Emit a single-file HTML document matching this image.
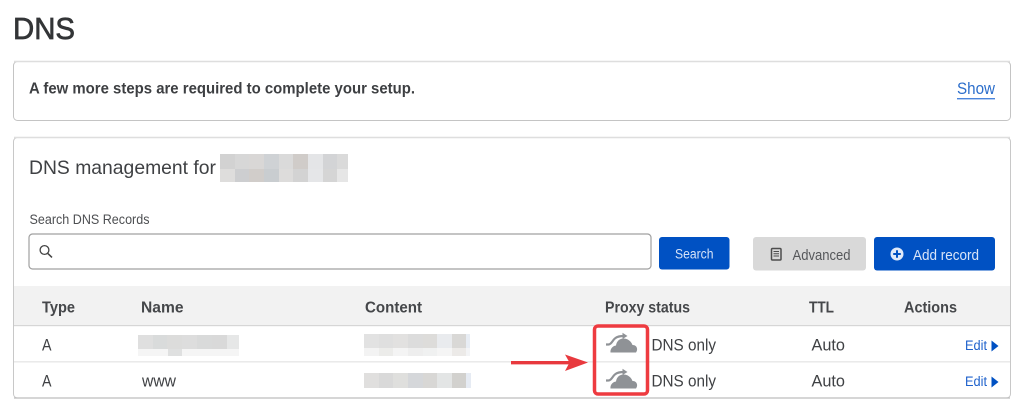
<!DOCTYPE html>
<html lang="en">
<head>
<meta charset="utf-8">
<title>DNS</title>
<style>
html,body{margin:0;padding:0;background:#fff;width:1024px;height:413px;overflow:hidden}
svg{display:block;position:absolute;left:0;top:0;filter:blur(.3px)}
text{font-family:"Liberation Sans",sans-serif;fill:#3b3d3f}
.b{font-weight:bold}
.th{font-weight:bold;font-size:16px;fill:#45474a}
.td{font-size:16.5px;fill:#3f4144}
.ed{font-size:13.5px;fill:#1f62cc}
</style>
</head>
<body>
<svg width="1024" height="413" viewBox="0 0 1024 413" xmlns="http://www.w3.org/2000/svg">
  <!-- Title -->
  <text x="13" y="39" font-size="31" textLength="62" lengthAdjust="spacingAndGlyphs" style="fill:#333537;stroke:#333537;stroke-width:.7">DNS</text>

  <!-- Setup card -->
  <rect x="13.5" y="61.5" width="997" height="59" rx="4" fill="#fff" stroke="#c4c4c4"/>
  <path d="M14 61.5H1010" stroke="#dedede" stroke-width="1.6"/>
  <text x="29" y="93.500" font-size="15.5" class="b" textLength="386" lengthAdjust="spacingAndGlyphs" style="fill:#3d3f42">A few more steps are required to complete your setup.</text>
  <text x="957" y="94" font-size="16.5" textLength="38" lengthAdjust="spacingAndGlyphs" style="fill:#2c6ecb">Show</text>
  <rect x="957" y="98" width="38" height="1.4" fill="#4a84dc"/>

  <!-- Management card -->
  <rect x="13.5" y="137.5" width="997" height="260.5" rx="4" fill="#fff" stroke="#c8c8c8"/>
  <path d="M14 137.5H1010" stroke="#dedede" stroke-width="1.4"/>
  <path d="M14 398H1010" stroke="#bdbdbd" stroke-width="1.2"/>
  <text x="29" y="174" font-size="19.5" textLength="187" lengthAdjust="spacingAndGlyphs" style="fill:#3f4144">DNS management for</text>

  <!-- Pixelated domain -->
  <g shape-rendering="crispEdges">
    <rect x="220" y="154" width="128" height="28" fill="#dcdcdc"/>
    <rect x="220" y="154" width="15" height="15" fill="#d2d2d2"/><rect x="235" y="154" width="15" height="15" fill="#d7d7d7"/><rect x="249" y="154" width="15" height="15" fill="#d9d7d6"/><rect x="264" y="154" width="15" height="15" fill="#cfd2d5"/><rect x="279" y="154" width="15" height="15" fill="#dadada"/><rect x="293" y="154" width="15" height="15" fill="#d0ccc9"/><rect x="308" y="154" width="15" height="15" fill="#e4e5e7"/><rect x="323" y="154" width="15" height="15" fill="#d3d4d6"/><rect x="337" y="154" width="11" height="15" fill="#dadada"/>
    <rect x="220" y="169" width="15" height="13" fill="#dedddc"/><rect x="235" y="169" width="15" height="13" fill="#cdced0"/><rect x="249" y="169" width="15" height="13" fill="#d1cdca"/><rect x="264" y="169" width="15" height="13" fill="#c9cdd0"/><rect x="279" y="169" width="15" height="13" fill="#dddcdb"/><rect x="293" y="169" width="15" height="13" fill="#d3d3d3"/><rect x="308" y="169" width="15" height="13" fill="#e5e6e8"/><rect x="323" y="169" width="15" height="13" fill="#d5d5d5"/><rect x="337" y="169" width="11" height="13" fill="#e6e6e6"/>
  </g>

  <!-- Search -->
  <text x="29.5" y="224" font-size="13.5" textLength="120" lengthAdjust="spacingAndGlyphs" style="fill:#4d4f52">Search DNS Records</text>
  <rect x="29" y="234" width="622" height="35" rx="3.5" fill="#fff" stroke="#a0a0a0" stroke-width="1.2"/>
  <circle cx="44.5" cy="250" r="4.4" fill="none" stroke="#444" stroke-width="1.3"/>
  <path d="M47.8 253.4L52 257.4" stroke="#444" stroke-width="1.5"/>
  <rect x="659" y="237" width="70.500" height="32.500" rx="3" fill="#0051c3"/>
  <text x="675" y="258.500" font-size="13.500" textLength="38.500" lengthAdjust="spacingAndGlyphs" style="fill:#d6e3f8">Search</text>

  <!-- Advanced -->
  <rect x="753" y="237" width="113" height="33.500" rx="3" fill="#d9d9d9"/>
  <rect x="771.500" y="248.500" width="9.500" height="11.500" rx="1" fill="none" stroke="#4d4d4d" stroke-width="1.500"/>
  <path d="M773.500 251.500H779M773.500 253.800H779M773.500 256H779" stroke="#4d4d4d" stroke-width="1"/>
  <text x="792.500" y="260" font-size="14.500" textLength="58" lengthAdjust="spacingAndGlyphs" style="fill:#55575a">Advanced</text>

  <!-- Add record -->
  <rect x="874" y="237" width="121" height="33.500" rx="3" fill="#0051c3"/>
  <circle cx="897" cy="254" r="6.500" fill="#dfe9f9"/>
  <path d="M893.200 254H900.800M897 250.200V257.800" stroke="#0051c3" stroke-width="2"/>
  <text x="913" y="260" font-size="14.500" textLength="66" lengthAdjust="spacingAndGlyphs" style="fill:#d9e5f8">Add record</text>

  <!-- Table header -->
  <rect x="14" y="286" width="996" height="39" fill="#f2f2f2"/>
  <rect x="14" y="325" width="996" height="1.200" fill="#d6d6d6"/>
  <rect x="14" y="361.300" width="996" height="1.100" fill="#e2e2e2"/>
  <text x="42" y="312.500" class="th" textLength="33" lengthAdjust="spacingAndGlyphs">Type</text>
  <text x="141" y="312.500" class="th" textLength="42.500" lengthAdjust="spacingAndGlyphs">Name</text>
  <text x="365" y="312.500" class="th" textLength="57" lengthAdjust="spacingAndGlyphs">Content</text>
  <text x="605" y="312.500" class="th" textLength="85" lengthAdjust="spacingAndGlyphs">Proxy status</text>
  <text x="809" y="312.500" class="th" textLength="25" lengthAdjust="spacingAndGlyphs">TTL</text>
  <text x="904" y="312.500" class="th" textLength="53" lengthAdjust="spacingAndGlyphs">Actions</text>

  <!-- Rows -->
  <text x="42" y="350.500" class="td" textLength="9.500" lengthAdjust="spacingAndGlyphs">A</text>
  <text x="42" y="386.500" class="td" textLength="9.500" lengthAdjust="spacingAndGlyphs">A</text>
  <text x="142" y="386.500" class="td" textLength="34" lengthAdjust="spacingAndGlyphs">www</text>

  <g shape-rendering="crispEdges">
    <!-- name blur -->
    <rect x="138" y="335" width="15" height="14" fill="#dfdfdf"/><rect x="153" y="335" width="14" height="14" fill="#d9dbdb"/><rect x="167" y="335" width="15" height="14" fill="#dcdcdb"/><rect x="182" y="335" width="15" height="14" fill="#dddddd"/><rect x="197" y="335" width="15" height="14" fill="#d9dada"/><rect x="212" y="335" width="15" height="14" fill="#d9d9d9"/><rect x="227" y="335" width="12" height="14" fill="#e6e7e7"/>
    <rect x="138" y="349" width="101" height="7" fill="#f5f5f5"/><rect x="168" y="349" width="14" height="7" fill="#dfe0e0"/>
    <!-- content 1 -->
    <rect x="364" y="334" width="15" height="14" fill="#e2e2e2"/><rect x="379" y="334" width="14" height="14" fill="#dfdfdf"/><rect x="393" y="334" width="15" height="14" fill="#e2e1e0"/><rect x="408" y="334" width="15" height="14" fill="#dcdcdc"/><rect x="423" y="334" width="14" height="14" fill="#dddcda"/><rect x="437" y="334" width="15" height="14" fill="#e9ebee"/><rect x="452" y="334" width="14" height="14" fill="#d9d8d6"/><rect x="466" y="334" width="4" height="14" fill="#e8edf4"/>
    <rect x="364" y="348" width="15" height="8" fill="#f3f3f3"/><rect x="379" y="348" width="14" height="8" fill="#ececea"/><rect x="393" y="348" width="15" height="8" fill="#f4f4f4"/><rect x="408" y="348" width="15" height="8" fill="#eeeeee"/><rect x="423" y="348" width="14" height="8" fill="#f0f1f1"/><rect x="437" y="348" width="15" height="8" fill="#f5f5f5"/><rect x="452" y="348" width="14" height="8" fill="#eceae8"/><rect x="466" y="348" width="4" height="8" fill="#f3f4f6"/>
    <!-- content 2 -->
    <rect x="364" y="373" width="15" height="15" fill="#e0dfde"/><rect x="379" y="373" width="14" height="15" fill="#d9d9d9"/><rect x="393" y="373" width="15" height="15" fill="#dfdfdd"/><rect x="408" y="373" width="15" height="15" fill="#d5d7da"/><rect x="423" y="373" width="14" height="15" fill="#d8d7d5"/><rect x="437" y="373" width="15" height="15" fill="#e3e5e5"/><rect x="452" y="373" width="14" height="15" fill="#d2d1ce"/><rect x="466" y="373" width="5" height="15" fill="#e6ebf3"/>
  </g>

  <!-- Proxy icon row 1 -->
  <g fill="#8f9296">
    <path d="M610.500 352.500H636C638.500 349 636.500 344.800 632.500 345C631 340.500 626 337.500 621.500 338.800C618 339.800 616.500 342.500 616 345.500C612.800 345.800 610 349 610.500 352.500Z"/>
    <path d="M606 344.500H608.500C611.500 344.500 612.500 340 615.500 338C617.500 336.500 620 336 624 336" fill="none" stroke="#8f9296" stroke-width="2.200"/>
    <path d="M622.500 332.800L627.500 336L622.500 339Z"/>
  </g>
  <!-- Proxy icon row 2 -->
  <g fill="#8f9296" transform="translate(0 36)">
    <path d="M610.500 352.500H636C638.500 349 636.500 344.800 632.500 345C631 340.500 626 337.500 621.500 338.800C618 339.800 616.500 342.500 616 345.500C612.800 345.800 610 349 610.500 352.500Z"/>
    <path d="M606 344.500H608.500C611.500 344.500 612.500 340 615.500 338C617.500 336.500 620 336 624 336" fill="none" stroke="#8f9296" stroke-width="2.200"/>
    <path d="M622.500 332.800L627.500 336L622.500 339Z"/>
  </g>

  <text x="651.500" y="350.500" class="td" textLength="64.500" lengthAdjust="spacingAndGlyphs">DNS only</text>
  <text x="651.500" y="386.500" class="td" textLength="64.500" lengthAdjust="spacingAndGlyphs">DNS only</text>
  <text x="811.500" y="350.500" class="td" textLength="33.500" lengthAdjust="spacingAndGlyphs">Auto</text>
  <text x="811.500" y="386.500" class="td" textLength="33.500" lengthAdjust="spacingAndGlyphs">Auto</text>

  <text x="965" y="350" class="ed" textLength="22" lengthAdjust="spacingAndGlyphs">Edit</text>
  <text x="965" y="386" class="ed" textLength="22" lengthAdjust="spacingAndGlyphs">Edit</text>
  <path d="M991.500 340.500L998.500 346L991.500 351.500Z" fill="#0051c3"/>
  <path d="M991.500 376.500L998.500 382L991.500 387.500Z" fill="#0051c3"/>

  <!-- Red annotation -->
  <rect x="594.500" y="326" width="53" height="68" rx="3.500" fill="none" stroke="#ee3b40" stroke-width="3.500"/>
  <path d="M511 362.700H572" stroke="#e8393e" stroke-width="3.400"/>
  <path d="M565 354.500L588 362.500L565 371L569.500 362.500Z" fill="#e8393e"/>
</svg>
</body>
</html>
